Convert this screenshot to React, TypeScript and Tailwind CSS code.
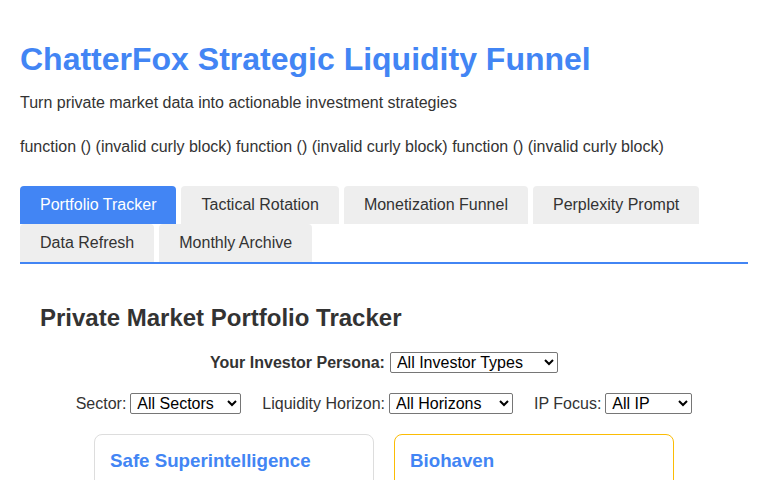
import { useState } from 'react';

const tabs = [
  'Portfolio Tracker',
  'Tactical Rotation',
  'Monetization Funnel',
  'Perplexity Prompt',
  'Data Refresh',
  'Monthly Archive',
];

const companies = [
  { name: 'Safe Superintelligence', highlight: false },
  { name: 'Biohaven', highlight: true },
];

function Select({ options, width }: { options: string[]; width: string }) {
  return (
    <select
      className={`${width} h-[21px] border border-[#767676] rounded-[2px] bg-white text-[16px] leading-[18px] text-black pl-[2px]`}
    >
      {options.map((o) => (
        <option key={o}>{o}</option>
      ))}
    </select>
  );
}

export default function App() {
  const [active, setActive] = useState(0);

  return (
    <div className="min-h-screen bg-white px-5 pt-5 text-[#333] font-['Liberation_Sans',Arial,sans-serif]">
      {/* Header */}
      <h1 className="mt-[21px] text-[32px] leading-[37px] font-bold text-[#4285f4]">
        ChatterFox Strategic Liquidity Funnel
      </h1>
      <p className="mt-[16px] text-[16px] leading-[18px]">
        Turn private market data into actionable investment strategies
      </p>
      <p className="mt-[26px] text-[16px] leading-[18px]">
        function () (invalid curly block) function () (invalid curly block) function () (invalid curly block)
      </p>

      {/* Tabs */}
      <div className="mt-[30px] flex flex-wrap border-b-2 border-[#4285f4]">
        {tabs.map((tab, i) => (
          <button
            key={tab}
            onClick={() => setActive(i)}
            className={`mr-[5px] h-[38px] px-5 py-[10px] text-[16px] leading-[18px] rounded-t-[4px] ${
              active === i ? 'bg-[#4285f4] text-white' : 'bg-[#eeeeee] text-[#333]'
            }`}
          >
            {tab}
          </button>
        ))}
      </div>

      {/* Tracker */}
      <div className="p-5">
        <h2 className="mt-5 text-[24px] leading-[28px] font-bold text-[#333]">
          Private Market Portfolio Tracker
        </h2>

        <div className="mt-5 flex justify-center items-center h-[21px] text-[16px]">
          <label className="font-bold mr-[5px]">Your Investor Persona:</label>
          <Select width="w-[168px]" options={['All Investor Types', 'Venture Capital', 'Family Office']} />
        </div>

        <div className="mt-5 flex justify-center items-center h-[21px] text-[16px] gap-[21px]">
          <div className="flex items-center gap-[4px]">
            <span>Sector:</span>
            <Select width="w-[111px]" options={['All Sectors', 'AI', 'Biotech']} />
          </div>
          <div className="flex items-center gap-[4px]">
            <span>Liquidity Horizon:</span>
            <Select width="w-[124px]" options={['All Horizons', '0-12 months', '12-24 months']} />
          </div>
          <div className="flex items-center gap-[4px]">
            <span>IP Focus:</span>
            <Select width="w-[87px]" options={['All IP', 'Patents', 'Models']} />
          </div>
        </div>

        {/* Cards */}
        <div className="mt-5 flex justify-center gap-5">
          {companies.map((c) => (
            <div
              key={c.name}
              className={`w-[280px] h-[120px] rounded-[8px] border bg-white p-[15px] ${
                c.highlight ? 'border-[#fbbc05]' : 'border-[#dddddd]'
              }`}
            >
              <h3 className="text-[18.72px] leading-[22px] font-bold text-[#4285f4]">{c.name}</h3>
            </div>
          ))}
        </div>
      </div>
    </div>
  );
}
